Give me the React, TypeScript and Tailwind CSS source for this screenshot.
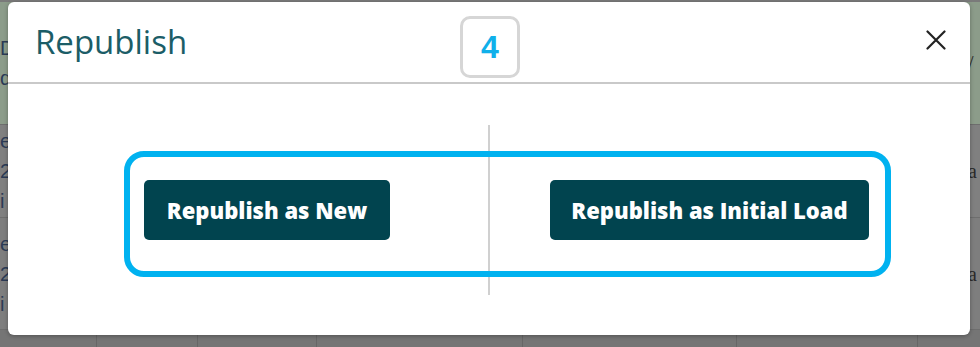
import React from "react";

function BgRow({ h, bg, letters, right }: { h: string; bg: string; letters: string[]; right: string[] }) {
  return (
    <div className={`flex ${h} ${bg} border-b border-[#6e6e6e]`}>
      <div className="w-[14px] flex flex-col justify-center items-start text-[20px] leading-[30px] text-[#2b3a55]" style={{ fontFamily: '"Liberation Sans", sans-serif' }}>
        {letters.map((l, i) => (
          <span key={i} className="whitespace-nowrap">{l}</span>
        ))}
      </div>
      <div className="flex-1" />
      <div className="w-[12px] flex flex-col justify-center items-start text-[20px] leading-[30px] text-[#2b2b2b]" style={{ fontFamily: '"Liberation Serif", serif' }}>
        {right.map((l, i) => (
          <span key={i} className="whitespace-nowrap">{l}</span>
        ))}
      </div>
    </div>
  );
}

export default function App() {
  return (
    <div className="relative w-[980px] h-[347px] overflow-hidden bg-[#7b7b7b]" style={{ fontFamily: '"Open Sans", "Liberation Sans", sans-serif' }}>
      {/* dimmed page behind */}
      <div className="flex flex-col">
        <div className="h-[2px] bg-[#7a7a7a]" />
        <BgRow h="h-[123px]" bg="bg-[#8c9c8a]" letters={["D", "d"]} right={["", "/"]} />
        <BgRow h="h-[93px]" bg="bg-[#808080]" letters={["e", "2", "i"]} right={["a"]} />
        <BgRow h="h-[112px]" bg="bg-[#7e7e7e]" letters={["e", "2", "i"]} right={["a"]} />
        <div className="flex h-[20px] bg-[#757575]">
          <div className="w-[97px] border-r border-[#666]" />
          <div className="w-[101px] border-r border-[#666]" />
          <div className="w-[119px] border-r border-[#666]" />
          <div className="w-[206px] border-r border-[#666]" />
          <div className="w-[214px] border-r border-[#666]" />
          <div className="w-[181px] border-r border-[#666]" />
        </div>
      </div>

      {/* modal */}
      <div className="absolute left-[8px] top-[2px] w-[962px] h-[333px] bg-white rounded-[6px] shadow-[0_1px_4px_rgba(0,0,0,0.3)] flex flex-col">
        <div className="h-[82px] border-b-2 border-[#c9c9c9] flex items-center justify-between pl-[27px] pr-[23px]">
          <h2 className="text-[33px] text-[#1b5d67] leading-none pb-[2px]" style={{ fontFamily: '"Open Sans", sans-serif' }}>Republish</h2>
          <button className="w-[22px] h-[22px] flex items-center justify-center mb-[4px]">
            <svg width="20" height="20" viewBox="0 0 20 20">
              <path d="M1.5 1.5 L18.5 18.5 M18.5 1.5 L1.5 18.5" stroke="#222" strokeWidth="2.2" strokeLinecap="round" />
            </svg>
          </button>
        </div>

        <div className="flex-1 flex pt-[41px] pb-[40px]">
          <div className="w-[480px] shrink-0 flex items-center justify-end pr-[98px]">
            <button className="w-[246px] h-[60px] rounded-[5px] bg-[#01444f] text-white font-extrabold text-[22px] flex items-center justify-center">
              Republish as New
            </button>
          </div>
          <div className="w-[2px] shrink-0 bg-[#d0d0d0]" />
          <div className="flex-1 flex items-center justify-start pl-[60px]">
            <button className="w-[319px] h-[60px] rounded-[5px] bg-[#01444f] text-white font-extrabold text-[22px] flex items-center justify-center">
              Republish as Initial Load
            </button>
          </div>
        </div>

        {/* annotation: step badge */}
        <div className="absolute left-[452px] top-[14px] w-[60px] h-[62px] border-[3px] border-[#d6d6d6] rounded-[10px] bg-white flex items-center justify-center">
          <span className="text-[32px] font-bold text-[#10b0ea] leading-none" style={{ fontFamily: '"Liberation Sans", sans-serif' }}>4</span>
        </div>

        {/* annotation: highlight box */}
        <div className="absolute left-[116px] top-[149px] w-[767px] h-[126px] border-[6px] border-[#00b2f0] rounded-[20px] pointer-events-none" />
      </div>
    </div>
  );
}
